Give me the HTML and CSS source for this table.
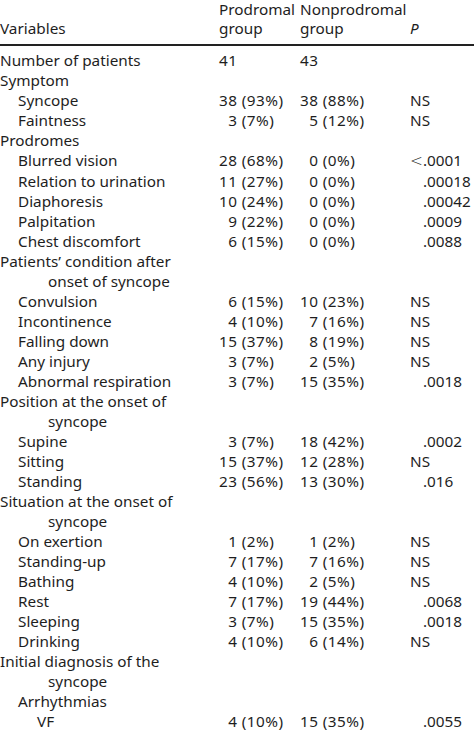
FILE: index.html
```html
<!DOCTYPE html>
<html lang="en">
<head>
<meta charset="utf-8">
<title>Table</title>
<link rel="stylesheet" href="styles.css">
</head>
<body>
<table class="tbl">
  <colgroup>
    <col class="c-var"><col class="c-pro"><col class="c-non"><col class="c-p">
  </colgroup>
  <thead>
    <tr>
      <th class="var">Variables</th>
      <th>Prodromal<br>group</th>
      <th>Nonprodromal<br>group</th>
      <th class="pcol"><i>P</i></th>
    </tr>
  </thead>
  <tbody>
    <tr class="first"><td class="l0">Number of patients</td><td class="num">41</td><td class="num">43</td><td></td></tr>
    <tr><td class="l0">Symptom</td><td></td><td></td><td></td></tr>
    <tr><td class="l1">Syncope</td><td class="num">38 (93%)</td><td class="num">38 (88%)</td><td>NS</td></tr>
    <tr><td class="l1">Faintness</td><td class="num pad">3 (7%)</td><td class="num pad">5 (12%)</td><td>NS</td></tr>
    <tr><td class="l0">Prodromes</td><td></td><td></td><td></td></tr>
    <tr><td class="l1">Blurred vision</td><td class="num">28 (68%)</td><td class="num pad">0 (0%)</td><td><span class="lt">&lt;</span>.0001</td></tr>
    <tr><td class="l1">Relation to urination</td><td class="num">11 (27%)</td><td class="num pad">0 (0%)</td><td class="dec">.00018</td></tr>
    <tr><td class="l1">Diaphoresis</td><td class="num">10 (24%)</td><td class="num pad">0 (0%)</td><td class="dec">.00042</td></tr>
    <tr><td class="l1">Palpitation</td><td class="num pad">9 (22%)</td><td class="num pad">0 (0%)</td><td class="dec">.0009</td></tr>
    <tr><td class="l1">Chest discomfort</td><td class="num pad">6 (15%)</td><td class="num pad">0 (0%)</td><td class="dec">.0088</td></tr>
    <tr><td class="l0 hang">Patients’ condition after<br>onset of syncope</td><td></td><td></td><td></td></tr>
    <tr><td class="l1">Convulsion</td><td class="num pad">6 (15%)</td><td class="num">10 (23%)</td><td>NS</td></tr>
    <tr><td class="l1">Incontinence</td><td class="num pad">4 (10%)</td><td class="num pad">7 (16%)</td><td>NS</td></tr>
    <tr><td class="l1">Falling down</td><td class="num">15 (37%)</td><td class="num pad">8 (19%)</td><td>NS</td></tr>
    <tr><td class="l1">Any injury</td><td class="num pad">3 (7%)</td><td class="num pad">2 (5%)</td><td>NS</td></tr>
    <tr><td class="l1">Abnormal respiration</td><td class="num pad">3 (7%)</td><td class="num">15 (35%)</td><td class="dec">.0018</td></tr>
    <tr><td class="l0 hang">Position at the onset of<br>syncope</td><td></td><td></td><td></td></tr>
    <tr><td class="l1">Supine</td><td class="num pad">3 (7%)</td><td class="num">18 (42%)</td><td class="dec">.0002</td></tr>
    <tr><td class="l1">Sitting</td><td class="num">15 (37%)</td><td class="num">12 (28%)</td><td>NS</td></tr>
    <tr><td class="l1">Standing</td><td class="num">23 (56%)</td><td class="num">13 (30%)</td><td class="dec">.016</td></tr>
    <tr><td class="l0 hang">Situation at the onset of<br>syncope</td><td></td><td></td><td></td></tr>
    <tr><td class="l1">On exertion</td><td class="num pad">1 (2%)</td><td class="num pad">1 (2%)</td><td>NS</td></tr>
    <tr><td class="l1">Standing-up</td><td class="num pad">7 (17%)</td><td class="num pad">7 (16%)</td><td>NS</td></tr>
    <tr><td class="l1">Bathing</td><td class="num pad">4 (10%)</td><td class="num pad">2 (5%)</td><td>NS</td></tr>
    <tr><td class="l1">Rest</td><td class="num pad">7 (17%)</td><td class="num">19 (44%)</td><td class="dec">.0068</td></tr>
    <tr><td class="l1">Sleeping</td><td class="num pad">3 (7%)</td><td class="num">15 (35%)</td><td class="dec">.0018</td></tr>
    <tr><td class="l1">Drinking</td><td class="num pad">4 (10%)</td><td class="num pad">6 (14%)</td><td>NS</td></tr>
    <tr><td class="l0 hang">Initial diagnosis of the<br>syncope</td><td></td><td></td><td></td></tr>
    <tr><td class="l1">Arrhythmias</td><td></td><td></td><td></td></tr>
    <tr><td class="l2">VF</td><td class="num pad">4 (10%)</td><td class="num">15 (35%)</td><td class="dec">.0055</td></tr>
  </tbody>
</table>
</body>
</html>
```
FILE: styles.css
```css
html, body {
  margin: 0;
  padding: 0;
  background: #ffffff;
}
body {
  font-family: "Noto Sans", "Open Sans", sans-serif;
  font-size: 15.3px;
  color: #1e1e1e;
  overflow: hidden;
}
.tbl {
  border-collapse: collapse;
  table-layout: fixed;
  width: 474px;
}
.c-var { width: 219px; }
.c-pro { width: 81px; }
.c-non { width: 110px; }
.c-p { width: 64px; }
.tbl th, .tbl td {
  padding: 0;
  text-align: left;
  font-weight: normal;
  line-height: 20px;
  white-space: nowrap;
  vertical-align: top;
}
.tbl thead th {
  vertical-align: bottom;
  line-height: 19px;
  padding-bottom: 6px;
  border-bottom: 2px solid #222;
}
.tbl tbody tr.first td {
  padding-top: 4px;
}
.tbl td.l1 { padding-left: 18px; }
.tbl td.l2 { padding-left: 37px; }
.tbl td.hang {
  padding-left: 48px;
  text-indent: -48px;
}
.tbl td.num { letter-spacing: 0.45px; }
.tbl td.pad::before {
  content: "0";
  visibility: hidden;
}
.tbl td.dec { padding-left: 13px; }
.lt {
  display: inline-block;
  width: 13px;
  font-family: "DejaVu Sans", sans-serif;
  font-weight: 200;
}
```
